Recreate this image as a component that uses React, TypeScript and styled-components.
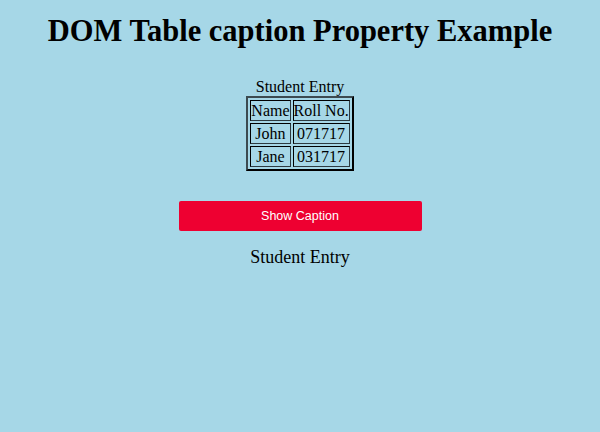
import { createGlobalStyle, styled } from "styled-components";

const GlobalStyle = createGlobalStyle`
  html, body {
    margin: 0;
    padding: 0;
    background: #a6d7e7;
  }
  body {
    font-family: "Liberation Serif", "Times New Roman", serif;
    color: #000000;
  }
`;

const App = (): JSX.Element => {
  return (
    <Page>
      <GlobalStyle />
      <Title>DOM Table caption Property Example</Title>
      <Table>
        <caption>Student Entry</caption>
        <tbody>
          <tr>
            <td>Name</td>
            <td>Roll No.</td>
          </tr>
          <tr>
            <td>John</td>
            <td>071717</td>
          </tr>
          <tr>
            <td>Jane</td>
            <td>031717</td>
          </tr>
        </tbody>
      </Table>
      <Button type="button">Show Caption</Button>
      <Result>Student Entry</Result>
    </Page>
  );
};

export default App;

const Page = styled.div`
  width: 600px;
  height: 432px;
  display: flex;
  flex-direction: column;
  align-items: center;
  padding-top: 13px;
  box-sizing: border-box;
`;

const Title = styled.h1`
  margin: 0;
  font-size: 30.5px;
  font-weight: 700;
  line-height: 37px;
`;

const Table = styled.table`
  margin-top: 28px;
  border: 2px outset #3c4a50;
  border-spacing: 2px;

  caption {
    font-size: 16px;
    line-height: 18px;
  }

  td {
    border: 1px inset #2d3a40;
    padding: 0;
    font-size: 16px;
    line-height: 19px;
    text-align: center;
  }
`;

const Button = styled.button`
  margin-top: 30px;
  width: 243px;
  height: 30px;
  border: none;
  border-radius: 2px;
  background: #ee0031;
  color: #ffffff;
  font-family: "Liberation Sans", Arial, sans-serif;
  font-size: 12.5px;
  cursor: pointer;
`;

const Result = styled.p`
  margin: 16px 0 0;
  font-size: 18px;
  line-height: 21px;
`;
